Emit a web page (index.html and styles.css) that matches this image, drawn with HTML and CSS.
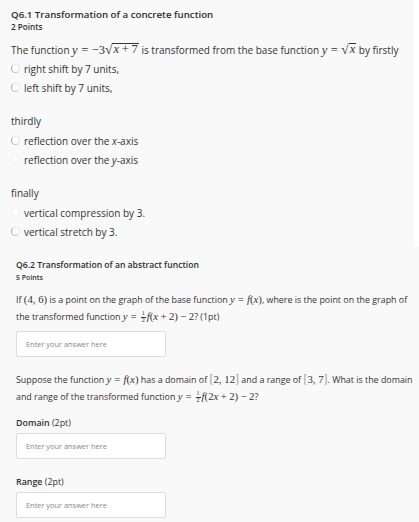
FILE: index.html
```html
<!DOCTYPE html>
<html lang="en">
<head>
    <meta charset="UTF-8">
    <meta name="viewport" content="width=device-width, initial-scale=1.0">
    <title>Q6 Transformations</title>
    <link rel="stylesheet" href="styles.css">
</head>
<body>
    <div class="page">
        <div class="question q1">
            <div class="q-title">Q6.1 Transformation of a concrete function</div>
            <div class="q-points">2 Points</div>

            <p class="prompt">The function <span class="math"><i>y</i><span class="rel">=</span>−3<span class="sqrt"><span class="rad">√</span><span class="under"><i>x</i><span class="bin">+</span>7</span></span></span> is transformed from the base function <span class="math"><i>y</i><span class="rel">=</span><span class="sqrt"><span class="rad">√</span><span class="under"><i>x</i></span></span></span> by firstly</p>
            <label class="option"><span class="radio"></span><span>right shift by 7 units,</span></label>
            <label class="option"><span class="radio"></span><span>left shift by 7 units,</span></label>

            <p class="step">thirdly</p>
            <label class="option"><span class="radio"></span><span>reflection over the <em>x</em>-axis</span></label>
            <label class="option"><span class="radio faint"></span><span>reflection over the <em>y</em>-axis</span></label>

            <p class="step">finally</p>
            <label class="option"><span class="radio faint"></span><span>vertical compression by 3.</span></label>
            <label class="option"><span class="radio"></span><span>vertical stretch by 3.</span></label>
        </div>

        <div class="question q2">
            <div class="q-title">Q6.2 Transformation of an abstract function</div>
            <div class="q-points">5 Points</div>

            <p class="prompt">If <span class="math">(4, 6)</span> is a point on the graph of the base function <span class="math"><i>y</i><span class="rel">=</span><i>f</i>(<i>x</i>)</span>, where is the point on the graph of the transformed function <span class="math"><i>y</i><span class="rel">=</span><span class="frac"><span>1</span><span>2</span></span><i>f</i>(<i>x</i><span class="bin">+</span>2)<span class="bin">−</span>2</span>? (1pt)</p>
            <div class="answer first">Enter your answer here</div>

            <p class="prompt second">Suppose the function <span class="math"><i>y</i><span class="rel">=</span><i>f</i>(<i>x</i>)</span> has a domain of <span class="math"><span class="br">[</span>2, 12<span class="br">]</span></span> and a range of <span class="math"><span class="br">[</span>3, 7<span class="br">]</span></span>. What is the domain and range of the transformed function <span class="math"><i>y</i><span class="rel">=</span><span class="frac"><span>1</span><span>2</span></span><i>f</i>(2<i>x</i><span class="bin">+</span>2)<span class="bin">−</span>2</span>?</p>

            <div class="field-label domain"><b>Domain</b> (2pt)</div>
            <div class="answer">Enter your answer here</div>

            <div class="field-label"><b>Range</b> (2pt)</div>
            <div class="answer">Enter your answer here</div>
        </div>
    </div>
</body>
</html>
```

FILE: styles.css
```css
html, body {
    margin: 0;
    padding: 0;
}
body {
    font-family: "Open Sans", "Noto Sans", sans-serif;
    font-size: 10px;
    color: #333;
    background-color: #f9f9f9;
}
.page {
    position: relative;
    padding: 8px 6px 0 11px;
}
.page::after {
    content: "";
    position: absolute;
    top: 0;
    right: 0;
    width: 5px;
    height: 247px;
    background-color: #fff;
}
.q-title {
    font-weight: 600;
    font-size: 9.7px;
    color: #2d2d2d;
    line-height: 13px;
}
.q-points {
    font-weight: 600;
    font-size: 8.2px;
    color: #333;
    line-height: 11px;
}
.prompt {
    margin: 9.5px 0 1.5px;
    line-height: 16px;
}
.step {
    margin: 16.5px 0 3.5px;
    line-height: 14px;
}
.option {
    display: flex;
    align-items: center;
    height: 19px;
}
.radio {
    display: inline-block;
    flex: none;
    width: 7px;
    height: 7px;
    margin-right: 4px;
    border-radius: 50%;
    border: 1px solid #e6e6e6;
    border-left-color: #a8a8a8;
    border-bottom-color: #c0c0c0;
    background-color: #fff;
}
.radio.faint {
    border-color: #efefef;
}
.math {
    font-family: "Liberation Serif", "DejaVu Serif", serif;
    font-size: 12.5px;
    white-space: nowrap;
    color: #333;
}
.math i {
    font-style: italic;
}
.rel {
    margin: 0 0.28em;
}
.bin {
    margin: 0 0.22em;
}
.sqrt {
    display: inline-flex;
    align-items: flex-end;
}
.rad {
    font-style: normal;
    font-size: 13.5px;
    line-height: 11px;
}
.under {
    border-top: 1px solid #333;
    line-height: 11px;
    padding: 0 1px;
}
.frac {
    display: inline-block;
    vertical-align: -2px;
    text-align: center;
    font-size: 6px;
    line-height: 5.5px;
    margin: 0 1px;
}
.frac span {
    display: block;
}
.frac span:first-child {
    border-bottom: 0.7px solid #333;
    padding: 0 1px;
}
.br {
    color: #999;
    font-size: 1.1em;
}
.q2 {
    margin-top: 18px;
    padding-left: 5px;
    font-size: 8.9px;
}
.q2 .q-title {
    font-size: 8.6px;
}
.q2 .q-points {
    font-size: 7px;
}
.q2 .math {
    font-size: 10.8px;
}
.q2 .prompt {
    margin-top: 7.5px;
}
.q2 .prompt.second {
    margin-top: 14px;
}
.answer {
    width: 150px;
    height: 26px;
    box-sizing: border-box;
    margin-top: 3px;
    padding: 0 9px;
    background-color: #fff;
    border: 1px solid #dcdcdc;
    border-radius: 2px;
    font-size: 7.4px;
    line-height: 24px;
    color: #888;
}
.answer.first {
    margin-top: 6px;
}
.field-label {
    line-height: 14px;
    margin-top: 16px;
}
.field-label.domain {
    margin-top: 11px;
}
.field-label b {
    font-weight: 600;
}
```
